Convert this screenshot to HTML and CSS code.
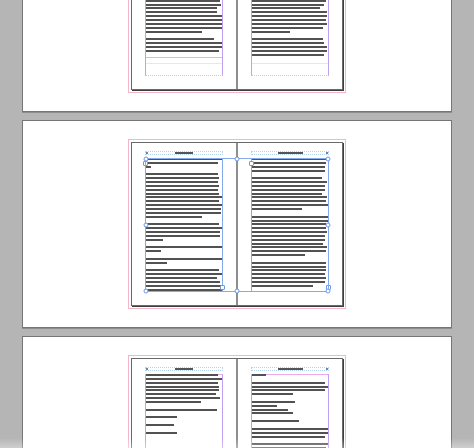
FILE: index.html
```html
<!DOCTYPE html>
<html>
<head>
<meta charset="utf-8">
<link rel="stylesheet" href="styles.css">
</head>
<body>
<div class="stage">

  <!-- Spread 1 -->
  <div class="panel">
    <div class="bleed">
      <div class="page">
        <div class="half">
          <div class="head"><i class="mk ml"></i><i class="rh" style="width:18px"></i></div>
          <div class="frame g">
            <div class="t">
              <i class="sp"></i>
              <i class="ln" style="width:74px"></i><i class="ln" style="width:75px"></i><i class="ln" style="width:71px"></i><i class="ln" style="width:71px"></i><i class="ln" style="width:76px"></i><i class="ln" style="width:76px"></i><i class="ln" style="width:76px"></i><i class="ln" style="width:76px"></i><i class="ln" style="width:56px"></i>
              <i class="bl"></i>
              <i class="ln" style="width:68px"></i><i class="ln" style="width:76px"></i><i class="ln" style="width:76px"></i><i class="ln" style="width:73px"></i>
            </div>
            <i class="bline"></i><i class="fline"></i>
          </div>
        </div>
        <div class="spine"></div>
        <div class="half">
          <div class="head"><i class="mk mr"></i><i class="rh" style="width:25px"></i></div>
          <div class="frame g">
            <div class="t">
              <i class="sp"></i>
              <i class="ln" style="width:74px"></i><i class="ln" style="width:72px"></i><i class="ln" style="width:68px"></i><i class="ln" style="width:75px"></i><i class="ln" style="width:75px"></i><i class="ln" style="width:74px"></i><i class="ln" style="width:75px"></i><i class="ln" style="width:71px"></i><i class="ln" style="width:38px"></i>
              <i class="bl"></i>
              <i class="ln" style="width:71px"></i><i class="ln" style="width:72px"></i><i class="ln" style="width:75px"></i><i class="ln" style="width:75px"></i><i class="ln" style="width:72px"></i>
            </div>
            <i class="fline"></i>
          </div>
        </div>
      </div>
    </div>
  </div>

  <!-- Spread 2 (selected) -->
  <div class="panel">
    <div class="bleed">
      <div class="page">
        <div class="half">
          <div class="head"><i class="mk ml"></i><i class="rh" style="width:18px"></i></div>
          <div class="frame s">
            <div class="t">
              <i class="ln" style="width:76px"></i><i class="ln" style="width:72px"></i><i class="ln" style="width:5px"></i>
              <i class="bl"></i>
              <i class="ln" style="width:72px"></i><i class="ln" style="width:73px"></i><i class="ln" style="width:72px"></i><i class="ln" style="width:73px"></i><i class="ln" style="width:72px"></i><i class="ln" style="width:73px"></i><i class="ln" style="width:76px"></i><i class="ln" style="width:73px"></i><i class="ln" style="width:76px"></i><i class="ln" style="width:75px"></i><i class="ln" style="width:75px"></i><i class="ln" style="width:56px"></i>
              <i class="bl"></i>
              <i class="ln" style="width:73px"></i><i class="ln" style="width:76px"></i><i class="ln" style="width:74px"></i><i class="ln" style="width:74px"></i><i class="ln" style="width:17px"></i>
              <i class="bl"></i>
              <i class="ln" style="width:76px"></i><i class="ln" style="width:15px"></i>
              <i class="bl"></i>
              <i class="ln" style="width:76px"></i><i class="ln" style="width:21px"></i>
              <i class="bl"></i>
              <i class="ln" style="width:73px"></i><i class="ln" style="width:76px"></i><i class="ln" style="width:71px"></i><i class="ln" style="width:74px"></i><i class="ln" style="width:76px"></i><i class="ln" style="width:76px"></i>
            </div>
            <i class="pt pin"></i><i class="pt pout"></i>
          </div>
        </div>
        <div class="spine"></div>
        <div class="half">
          <div class="head"><i class="mk mr"></i><i class="rh" style="width:25px"></i></div>
          <div class="frame s">
            <div class="t">
              <i class="ln" style="width:76px"></i><i class="ln" style="width:74px"></i><i class="ln" style="width:73px"></i><i class="ln" style="width:73px"></i>
              <i class="bl"></i>
              <i class="ln" style="width:70px"></i><i class="ln" style="width:75px"></i><i class="ln" style="width:73px"></i><i class="ln" style="width:73px"></i><i class="ln" style="width:70px"></i><i class="ln" style="width:75px"></i><i class="ln" style="width:74px"></i><i class="ln" style="width:76px"></i><i class="ln" style="width:50px"></i>
              <i class="bl"></i>
              <i class="ln" style="width:76px"></i><i class="ln" style="width:76px"></i><i class="ln" style="width:74px"></i><i class="ln" style="width:74px"></i><i class="ln" style="width:75px"></i><i class="ln" style="width:73px"></i><i class="ln" style="width:73px"></i><i class="ln" style="width:71px"></i><i class="ln" style="width:75px"></i><i class="ln" style="width:74px"></i><i class="ln" style="width:53px"></i>
              <i class="bl"></i>
              <i class="ln" style="width:74px"></i><i class="ln" style="width:74px"></i><i class="ln" style="width:74px"></i><i class="ln" style="width:73px"></i><i class="ln" style="width:74px"></i><i class="ln" style="width:73px"></i><i class="ln" style="width:61px"></i>
            </div>
            <i class="pt pin"></i><i class="pt pout"></i>
          </div>
        </div>
        <div class="sel">
          <i class="hd tl"></i><i class="hd tc"></i><i class="hd tr"></i>
          <i class="hd ml2"></i><i class="hd mr2"></i>
          <i class="hd bl2"></i><i class="hd bc"></i><i class="hd br"></i>
        </div>
      </div>
    </div>
  </div>

  <!-- Spread 3 -->
  <div class="panel">
    <div class="bleed">
      <div class="page">
        <div class="half">
          <div class="head"><i class="mk ml"></i><i class="rh" style="width:18px"></i></div>
          <div class="frame g">
            <div class="t">
              <i class="ln" style="width:72px"></i><i class="ln" style="width:76px"></i><i class="ln" style="width:72px"></i><i class="ln" style="width:73px"></i><i class="ln" style="width:73px"></i><i class="ln" style="width:70px"></i><i class="ln" style="width:74px"></i><i class="ln" style="width:55px"></i>
              <i class="bl"></i>
              <i class="ln" style="width:71px"></i>
              <i class="bl"></i>
              <i class="ln" style="width:31px"></i>
              <i class="bl"></i>
              <i class="ln" style="width:28px"></i>
              <i class="bl"></i>
              <i class="ln" style="width:31px"></i>
            </div>
          </div>
        </div>
        <div class="spine"></div>
        <div class="half">
          <div class="head"><i class="mk mr"></i><i class="rh" style="width:25px"></i></div>
          <div class="frame g">
            <div class="t">
              <i class="ln" style="width:14px"></i>
              <i class="bl"></i>
              <i class="ln" style="width:73px"></i><i class="ln" style="width:76px"></i><i class="ln" style="width:73px"></i><i class="ln" style="width:41px"></i>
              <i class="bl"></i>
              <i class="ln" style="width:43px"></i><i class="ln" style="width:25px"></i><i class="ln" style="width:36px"></i><i class="ln" style="width:41px"></i>
              <i class="bl"></i>
              <i class="ln" style="width:47px"></i>
              <i class="bl"></i>
              <i class="ln" style="width:76px"></i><i class="ln" style="width:76px"></i><i class="ln" style="width:73px"></i>
              <i class="bl"></i>
              <i class="ln" style="width:76px"></i><i class="ln" style="width:74px"></i>
            </div>
          </div>
        </div>
      </div>
    </div>
  </div>

</div>
<div class="fade"></div>
</body>
</html>
```

FILE: styles.css
```css
html, body {
  margin: 0;
  padding: 0;
}

body {
  position: relative;
  display: flow-root;
  width: 474px;
  height: 448px;
  overflow: hidden;
  background: #b5b5b5;
  font-family: "Liberation Sans", Arial, sans-serif;
}

.stage {
  margin-top: -96px;
  padding: 0 22px;
  display: flex;
  flex-direction: column;
  gap: 8px;
}

.panel {
  background: #ffffff;
  border: 1px solid #767676;
  box-shadow: 0 1px 0 #8e8e8e;
  padding: 18px 0;
  display: flex;
  justify-content: center;
}

.bleed {
  border: 1px solid #f2b6c7;
  padding: 2px;
}

.page {
  position: relative;
  width: 210px;
  height: 162px;
  border: 1px solid #6a6a6a;
  box-shadow: 1px 1px 0 #3e3e3e;
  background: #ffffff;
  display: flex;
}

.half {
  width: 104px;
  box-sizing: border-box;
  padding: 8px 0 0 13px;
}

.spine {
  width: 2px;
  background: #8e8e8e;
}

.head {
  position: relative;
  width: 78px;
  height: 4px;
  box-sizing: border-box;
  border: 1px dotted #b3d3f0;
  display: flex;
  justify-content: center;
}

.rh {
  display: block;
  height: 2px;
  background: #555555;
}

.mk {
  position: absolute;
  top: 0;
  width: 2px;
  height: 2px;
  background: #6a86b8;
}

.mk.ml { left: 0; }
.mk.mr { right: 0; }

.frame {
  position: relative;
  margin-top: 3px;
  width: 78px;
  height: 134px;
  box-sizing: border-box;
  border: 1px solid #86a8ec;
}

.frame.g {
  border-color: #f0a8ec #c0a0f2 #f0b4ee #c0a0f2;
  border-bottom-style: dotted;
}

.frame.s {
  border-color: #86a8ec;
}

.t {
  margin-top: -1px;
}

.ln {
  display: block;
  height: 2px;
  margin-bottom: 1.85px;
  background: #525252;
}

.bl {
  display: block;
  height: 3.85px;
}

.sp {
  display: block;
  height: 57.75px;
}

.bline {
  position: absolute;
  left: 0;
  right: 0;
  top: 114px;
  height: 1px;
  background: #bcc6fa;
}

.fline {
  position: absolute;
  left: 0;
  right: 0;
  top: 120px;
  height: 1px;
  background: #e4e6f4;
}

.pt {
  position: absolute;
  width: 5px;
  height: 5px;
  box-sizing: border-box;
  border: 1px solid #6e96e6;
  border-radius: 1px;
  background: #ffffff;
}

.pt.pin { left: -3px; top: 2px; }
.pt.pout { right: -3px; bottom: 1px; }

.sel {
  position: absolute;
  left: 13px;
  top: 15px;
  width: 184px;
  height: 134px;
  box-sizing: border-box;
  border: 1px solid #86a8ec;
}

.hd {
  position: absolute;
  width: 5px;
  height: 5px;
  box-sizing: border-box;
  border: 1px solid #6e96e6;
  border-radius: 50%;
  background: #ffffff;
  transform: translate(-50%, -50%);
}

.hd.tl { left: 0; top: 0; }
.hd.tc { left: 50%; top: 0; }
.hd.tr { left: 100%; top: 0; }
.hd.ml2 { left: 0; top: 50%; }
.hd.mr2 { left: 100%; top: 50%; }
.hd.bl2 { left: 0; top: 100%; }
.hd.bc { left: 50%; top: 100%; }
.hd.br { left: 100%; top: 100%; }

.fade {
  position: absolute;
  left: 0;
  right: 0;
  bottom: 0;
  height: 10px;
  background: linear-gradient(rgba(255, 255, 255, 0), rgba(255, 255, 255, 0.35));
}
```
